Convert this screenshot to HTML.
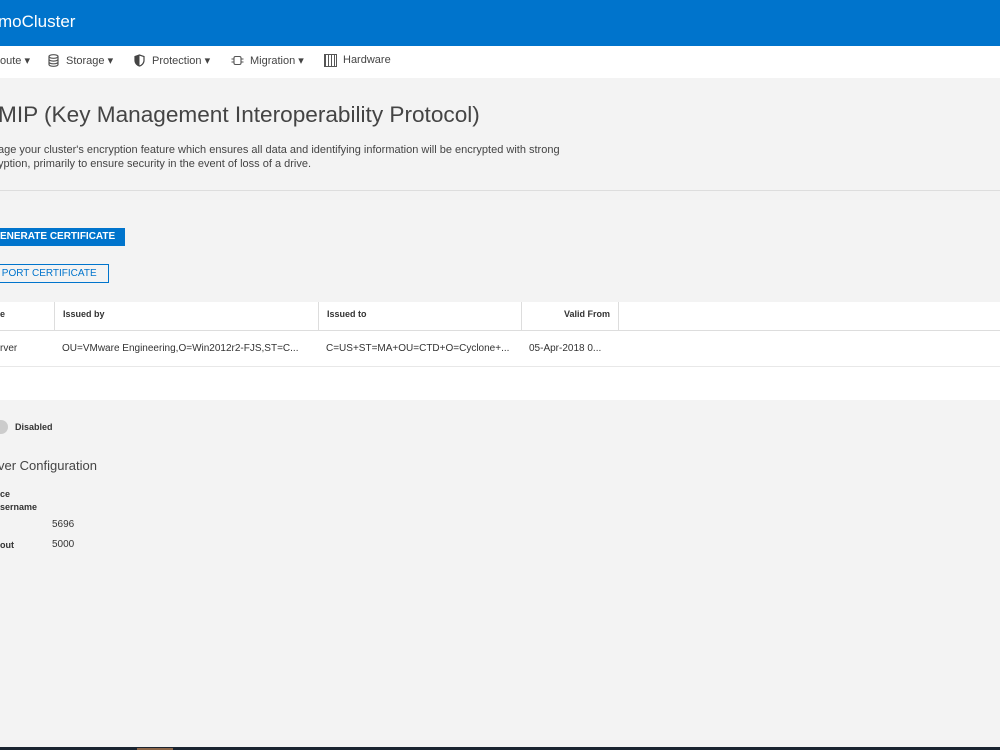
<!DOCTYPE html><html><head><style>
body{margin:0;width:1000px;height:750px;overflow:hidden;background:#f3f3f3;font-family:"Liberation Sans",sans-serif;position:relative;color:#333}
.a{position:absolute;white-space:nowrap}
</style></head><body>
<div class="a" style="left:0;top:0;width:1000px;height:46px;background:#0074cc"></div>
<div class="a" style="left:-2px;top:12px;color:#fff;font-size:17px">moCluster</div>
<div class="a" style="left:0;top:46px;width:1000px;height:32px;background:#fff"></div>
<div class="a" style="left:0;top:54px;font-size:11px;color:#444">oute ▾</div>
<svg class="a" style="left:48px;top:54px" width="11" height="13" viewBox="0 0 11 13"><g fill="none" stroke="#555" stroke-width="1.2"><ellipse cx="5.5" cy="2.5" rx="4.5" ry="1.8"/><path d="M1 2.5v8c0 1 2 1.8 4.5 1.8S10 11.5 10 10.5v-8M1 5.3c0 1 2 1.8 4.5 1.8S10 6.3 10 5.3M1 8c0 1 2 1.8 4.5 1.8S10 9 10 8"/></g></svg>
<div class="a" style="left:66px;top:54px;font-size:11px;color:#444">Storage ▾</div>
<svg class="a" style="left:134px;top:54px" width="11" height="13" viewBox="0 0 11 13"><path d="M5.5 1L1 2.5v4c0 3 2.5 5 4.5 5.5 2-.5 4.5-2.5 4.5-5.5v-4z" fill="none" stroke="#444" stroke-width="1.2"/><path d="M5.5 1v11c-2-.5-4.5-2.5-4.5-5.5v-4z" fill="#444"/></svg>
<div class="a" style="left:152px;top:54px;font-size:11px;color:#444">Protection ▾</div>
<svg class="a" style="left:231px;top:54px" width="13" height="13" viewBox="0 0 13 13"><g fill="none" stroke="#555" stroke-width="1.1"><rect x="3" y="2.5" width="7" height="8" rx="1.5"/><path d="M0.5 5h2.5M0.5 8h2.5M10 5h2.5M10 8h2.5"/></g></svg>
<div class="a" style="left:250px;top:54px;font-size:11px;color:#444">Migration ▾</div>
<div class="a" style="left:324px;top:54px;width:11px;height:11px;border:1px solid #555;background:repeating-linear-gradient(90deg,#555 0 1px,#fff 1px 3px)"></div>
<div class="a" style="left:343px;top:54px;font-size:11px;color:#444">Hardware</div>
<div class="a" style="left:-2px;top:102px;font-size:22.6px;color:#444">MIP (Key Management Interoperability Protocol)</div>
<div class="a" style="left:-2px;top:143px;font-size:11px;line-height:14px;color:#444">age your cluster's encryption feature which ensures all data and identifying information will be encrypted with strong<br>yption, primarily to ensure security in the event of loss of a drive.</div>
<div class="a" style="left:0;top:190px;width:1000px;height:1px;background:#ddd"></div>
<div class="a" style="left:0;top:228px;width:125px;height:18px;background:#0074cc;color:#fff;font-size:10px;font-weight:bold;line-height:18px">ENERATE CERTIFICATE</div>
<div class="a" style="left:-2px;top:264px;width:109px;height:17px;border:1px solid #0074cc;color:#0074cc;font-size:10px;line-height:17px">&nbsp;PORT CERTIFICATE</div>
<div class="a" style="left:0;top:302px;width:1000px;height:98px;background:#fff"></div>
<div class="a" style="left:0;top:330px;width:1000px;height:1px;background:#ddd"></div>
<div class="a" style="left:0;top:366px;width:1000px;height:1px;background:#e8e8e8"></div>
<div class="a" style="left:54px;top:302px;width:1px;height:28px;background:#ddd"></div>
<div class="a" style="left:318px;top:302px;width:1px;height:28px;background:#ddd"></div>
<div class="a" style="left:521px;top:302px;width:1px;height:28px;background:#ddd"></div>
<div class="a" style="left:618px;top:302px;width:1px;height:28px;background:#ddd"></div>
<div class="a" style="left:0;top:309px;font-size:9px;font-weight:bold">e</div>
<div class="a" style="left:63px;top:309px;font-size:9px;font-weight:bold">Issued by</div>
<div class="a" style="left:327px;top:309px;font-size:9px;font-weight:bold">Issued to</div>
<div class="a" style="left:564px;top:309px;font-size:9px;font-weight:bold">Valid From</div>
<div class="a" style="left:0;top:343px;font-size:10px">rver</div>
<div class="a" style="left:62px;top:343px;font-size:10px">OU=VMware Engineering,O=Win2012r2-FJS,ST=C...</div>
<div class="a" style="left:326px;top:343px;font-size:10px">C=US+ST=MA+OU=CTD+O=Cyclone+...</div>
<div class="a" style="left:529px;top:343px;font-size:10px">05-Apr-2018 0...</div>
<div class="a" style="left:-8px;top:420px;width:16px;height:14px;border-radius:7px;background:#ccc"></div>
<div class="a" style="left:15px;top:422px;font-size:9px;font-weight:bold">Disabled</div>
<div class="a" style="left:-2px;top:458px;font-size:13px;color:#444">ver Configuration</div>
<div class="a" style="left:0;top:488px;font-size:9px;font-weight:bold;line-height:13px">ce<br>sername</div>
<div class="a" style="left:52px;top:519px;font-size:10px">5696</div>
<div class="a" style="left:0;top:540px;font-size:9px;font-weight:bold">out</div>
<div class="a" style="left:52px;top:539px;font-size:10px">5000</div>
<div class="a" style="left:0;top:747px;width:1000px;height:3px;background:#1a2430"></div>
<div class="a" style="left:137px;top:748px;width:36px;height:2px;background:#8a6548"></div>
</body></html>
